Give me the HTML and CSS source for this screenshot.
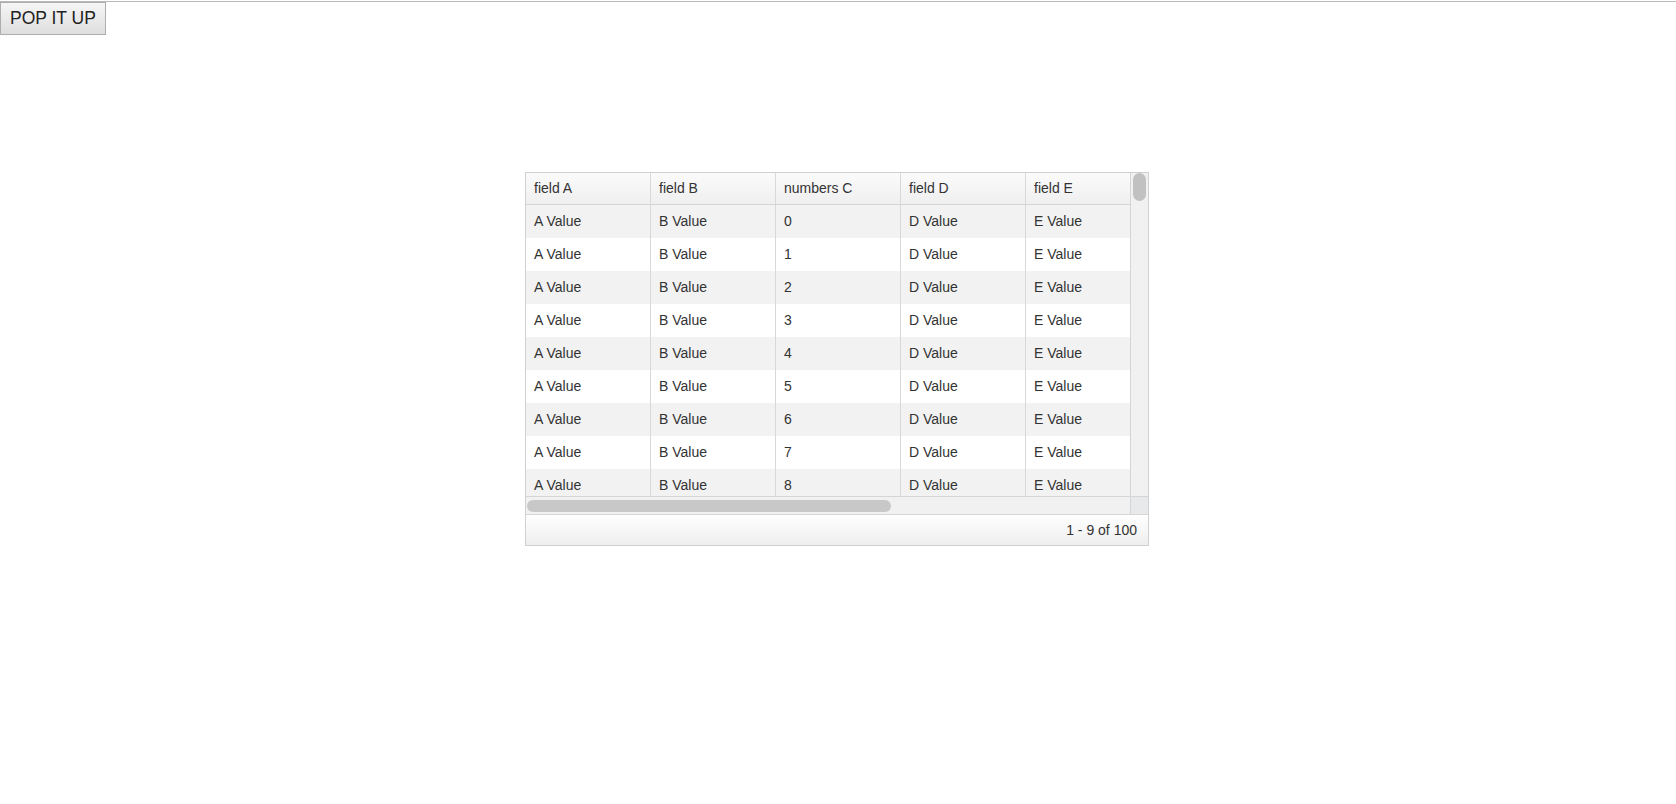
FILE: index.html
```html
<!DOCTYPE html>
<html>
<head>
<meta charset="utf-8">
<title>Grid</title>
<link rel="stylesheet" href="styles.css">
</head>
<body>
<div class="topline"></div>
<button class="pop">POP IT UP</button>
<div class="grid">
  <div class="grid-main">
    <div class="viewport">
      <div class="table">
        <div class="row head"><div class="cell">field A</div><div class="cell">field B</div><div class="cell">numbers C</div><div class="cell">field D</div><div class="cell">field E</div></div>
        <div class="row even"><div class="cell">A Value</div><div class="cell">B Value</div><div class="cell">0</div><div class="cell">D Value</div><div class="cell">E Value</div></div>
        <div class="row"><div class="cell">A Value</div><div class="cell">B Value</div><div class="cell">1</div><div class="cell">D Value</div><div class="cell">E Value</div></div>
        <div class="row even"><div class="cell">A Value</div><div class="cell">B Value</div><div class="cell">2</div><div class="cell">D Value</div><div class="cell">E Value</div></div>
        <div class="row"><div class="cell">A Value</div><div class="cell">B Value</div><div class="cell">3</div><div class="cell">D Value</div><div class="cell">E Value</div></div>
        <div class="row even"><div class="cell">A Value</div><div class="cell">B Value</div><div class="cell">4</div><div class="cell">D Value</div><div class="cell">E Value</div></div>
        <div class="row"><div class="cell">A Value</div><div class="cell">B Value</div><div class="cell">5</div><div class="cell">D Value</div><div class="cell">E Value</div></div>
        <div class="row even"><div class="cell">A Value</div><div class="cell">B Value</div><div class="cell">6</div><div class="cell">D Value</div><div class="cell">E Value</div></div>
        <div class="row"><div class="cell">A Value</div><div class="cell">B Value</div><div class="cell">7</div><div class="cell">D Value</div><div class="cell">E Value</div></div>
        <div class="row even"><div class="cell">A Value</div><div class="cell">B Value</div><div class="cell">8</div><div class="cell">D Value</div><div class="cell">E Value</div></div>
      </div>
    </div>
    <div class="vscroll"><div class="vthumb"></div></div>
    <div class="hscroll"><div class="hthumb"></div></div>
    <div class="corner"></div>
  </div>
  <div class="pager">1 - 9 of 100</div>
</div>
</body>
</html>
```

FILE: styles.css
```css
html, body {
  margin: 0;
  padding: 0;
  background: #ffffff;
}

body {
  font-family: "Liberation Sans", Arial, sans-serif;
}

.topline {
  height: 1px;
  margin-top: 1px;
  background: #b9b9b9;
}

.pop {
  display: block;
  margin: 0;
  height: 33px;
  padding: 0 9px;
  font-family: "Liberation Sans", Arial, sans-serif;
  font-size: 17.5px;
  color: #222222;
  border: 1px solid #adadad;
  border-radius: 0;
  background: linear-gradient(to bottom, #f6f6f6, #dedede);
}

.grid {
  width: 622px;
  margin: 137px 0 0 525px;
  border: 1px solid #d0d0d0;
  font-size: 14px;
  color: #333333;
}

.grid-main {
  display: grid;
  grid-template-columns: 604px 18px;
  grid-template-rows: 323px 18px;
}

.viewport {
  overflow: hidden;
}

.table {
  width: 1000px;
}

.row {
  display: flex;
  height: 33px;
  background: #ffffff;
}

.row.even {
  background: #f2f2f2;
}

.row.head {
  height: 32px;
  border-bottom: 1px solid #d5d5d5;
  box-sizing: border-box;
  background: linear-gradient(to bottom, #fbfbfb, #efefef);
}

.cell {
  flex: 0 0 125px;
  box-sizing: border-box;
  padding: 0 8px;
  border-right: 1px solid #d8d8d8;
  line-height: 33px;
  white-space: nowrap;
  overflow: hidden;
}

.row.head .cell {
  line-height: 31px;
}

.vscroll {
  border-left: 1px solid #d5d5d5;
  background: #f1f1f1;
}

.vthumb {
  width: 13px;
  height: 28px;
  margin: 0 0 0 2px;
  border-radius: 7px;
  background: #c1c1c1;
}

.hscroll {
  border-top: 1px solid #d5d5d5;
  background: #f1f1f1;
}

.hthumb {
  width: 364px;
  height: 12px;
  margin: 3px 0 0 1px;
  border-radius: 6px;
  background: #c8c8c8;
}

.corner {
  border-top: 1px solid #d5d5d5;
  border-left: 1px solid #d5d5d5;
  background: #e7e9eb;
}

.pager {
  height: 30px;
  border-top: 1px solid #d5d5d5;
  background: linear-gradient(to bottom, #ffffff, #eeeeee);
  text-align: right;
  padding-right: 11px;
  line-height: 30px;
  font-size: 14px;
}
```
